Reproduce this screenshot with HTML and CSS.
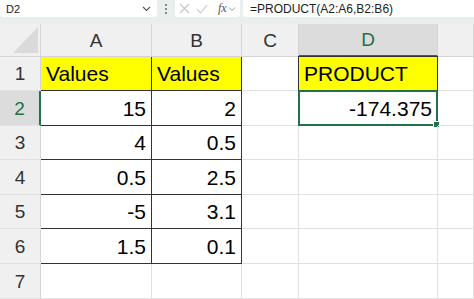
FILE: index.html
```html
<!DOCTYPE html>
<html lang="en">
<head>
  <meta charset="UTF-8" />
  <meta name="viewport" content="width=device-width, initial-scale=1" />
  <title>PRODUCT</title>
  <link rel="stylesheet" href="styles.css">
</head>
<body>

  <div class="toolbar">
    <div class="namebox">
      <span>D2</span>
      <svg class="chev" width="9" height="6" viewBox="0 0 9 6"><path d="M1 1l3.5 3.5L8 1" fill="none" stroke="#555" stroke-width="1.1"/></svg>
    </div>
    <div class="dots"><i></i><i></i><i></i></div>
    <div class="fxbox">
      <svg width="11" height="11" viewBox="0 0 11 11"><path d="M1 1l9 9M10 1l-9 9" stroke="#c4c4c4" stroke-width="1.1"/></svg>
      <svg width="12" height="10" viewBox="0 0 12 10"><path d="M1 5l3.5 4L11 1" fill="none" stroke="#c4c4c4" stroke-width="1.1"/></svg>
      <span class="fx">fx</span>
      <svg class="chev" width="8" height="6" viewBox="0 0 8 6"><path d="M1 1.5l3 3 3-3" fill="none" stroke="#999" stroke-width="1"/></svg>
    </div>
    <div class="formula">=PRODUCT(A2:A6,B2:B6)</div>
  </div>

  <div class="sheet">
    <div class="hd corner"><svg width="26" height="28" viewBox="0 0 26 28"><polygon points="0,27 25,1 25,27" fill="#dadada"/></svg></div>
    <div class="hd">A</div>
    <div class="hd">B</div>
    <div class="hd">C</div>
    <div class="hd sel">D</div>
    <div class="hd"></div>

    <div class="rh">1</div>
    <div class="c yel bl">Values</div>
    <div class="c yel bl">Values</div>
    <div class="c"></div>
    <div class="c yel box">PRODUCT</div>
    <div class="c"></div>

    <div class="rh sel">2</div>
    <div class="c num bl">15</div>
    <div class="c num bl">2</div>
    <div class="c"></div>
    <div class="c num active">-174.375<b class="handle"></b></div>
    <div class="c"></div>

    <div class="rh">3</div>
    <div class="c num bl">4</div>
    <div class="c num bl">0.5</div>
    <div class="c"></div>
    <div class="c"></div>
    <div class="c"></div>

    <div class="rh">4</div>
    <div class="c num bl">0.5</div>
    <div class="c num bl">2.5</div>
    <div class="c"></div>
    <div class="c"></div>
    <div class="c"></div>

    <div class="rh">5</div>
    <div class="c num bl">-5</div>
    <div class="c num bl">3.1</div>
    <div class="c"></div>
    <div class="c"></div>
    <div class="c"></div>

    <div class="rh">6</div>
    <div class="c num bl last">1.5</div>
    <div class="c num bl last">0.1</div>
    <div class="c"></div>
    <div class="c"></div>
    <div class="c"></div>

    <div class="rh">7</div>
    <div class="c"></div>
    <div class="c"></div>
    <div class="c"></div>
    <div class="c"></div>
    <div class="c"></div>
  </div>

</body>
</html>
```

FILE: styles.css
```css
body {
  margin: 0;
  width: 474px;
  height: 299px;
  overflow: hidden;
  font-family: "Liberation Sans", Arial, sans-serif;
  background: #fff;
  color: #000;
}
.toolbar {
  display: flex;
  align-items: stretch;
  height: 17px;
  padding-bottom: 7px;
  background: #e9efec;
}
.namebox {
  width: 157px;
  background: #fff;
  border-radius: 0 0 3px 3px;
  display: flex;
  align-items: center;
  justify-content: space-between;
  padding: 0 6px;
  box-sizing: border-box;
  font-size: 11px;
  color: #222;
}
.dots {
  width: 18px;
  display: flex;
  flex-direction: column;
  align-items: center;
  justify-content: center;
  gap: 2px;
}
.dots i {
  width: 2px;
  height: 2px;
  background: #666;
  border-radius: 1px;
}
.fxbox {
  width: 65px;
  background: #fff;
  border-radius: 0 0 3px 3px;
  display: flex;
  align-items: center;
  gap: 6px;
  padding-left: 4px;
  box-sizing: border-box;
}
.fx {
  font-family: "Liberation Serif", serif;
  font-style: italic;
  font-size: 12px;
  color: #555;
  margin-left: 4px;
}
.fxbox .chev {
  margin-left: -5px;
}
.formula {
  flex: 1;
  margin-left: 3px;
  background: #fff;
  border-radius: 0 0 0 3px;
  display: flex;
  align-items: center;
  padding-left: 7px;
  font-size: 12px;
  color: #222;
}
.sheet {
  display: grid;
  grid-template-columns: 41px 111px 90px 57px 139px 1fr;
  grid-template-rows: 33px 34px 35px 34px 35px 34px 35px 35px;
}
.sheet > div {
  box-sizing: border-box;
  border-right: 1px solid #e1e1e1;
  border-bottom: 1px solid #e1e1e1;
  position: relative;
}
.hd {
  background: #f0f0f0;
  border-right-color: #d4d4d4 !important;
  border-bottom-color: #d4d4d4 !important;
  color: #333;
  font-size: 19px;
  display: flex;
  align-items: center;
  justify-content: center;
  padding-top: 1px;
}
.hd.corner {
  align-items: flex-end;
  justify-content: flex-end;
  padding: 0 1px 2px 0;
}
.hd.sel {
  background: #dcdcdc;
  color: #237148;
  border-bottom: 2px solid #237148 !important;
}
.rh {
  background: #f0f0f0;
  border-right-color: #d4d4d4 !important;
  color: #333;
  font-size: 19px;
  display: flex;
  align-items: center;
  justify-content: center;
  padding-top: 1px;
}
.rh.sel {
  background: #dcdcdc;
  color: #237148;
  border-right: 2px solid #237148 !important;
}
.c {
  font-size: 21px;
  display: flex;
  align-items: center;
  padding: 1px 5px 0;
}
.yel {
  background: #ffff00;
}
.num {
  justify-content: flex-end;
}
.bl {
  border-right-color: #333 !important;
  border-bottom-color: #333 !important;
}
.box {
  border: 1px solid #333 !important;
  margin-left: -1px;
  margin-top: -1px;
}
.active {
  border: 2px solid #237148 !important;
  margin: -1px 0 0 -1px;
  padding-right: 4px;
}
.handle {
  position: absolute;
  right: -4px;
  bottom: -4px;
  width: 5px;
  height: 5px;
  background: #237148;
  border: 1px solid #fff;
}
```
